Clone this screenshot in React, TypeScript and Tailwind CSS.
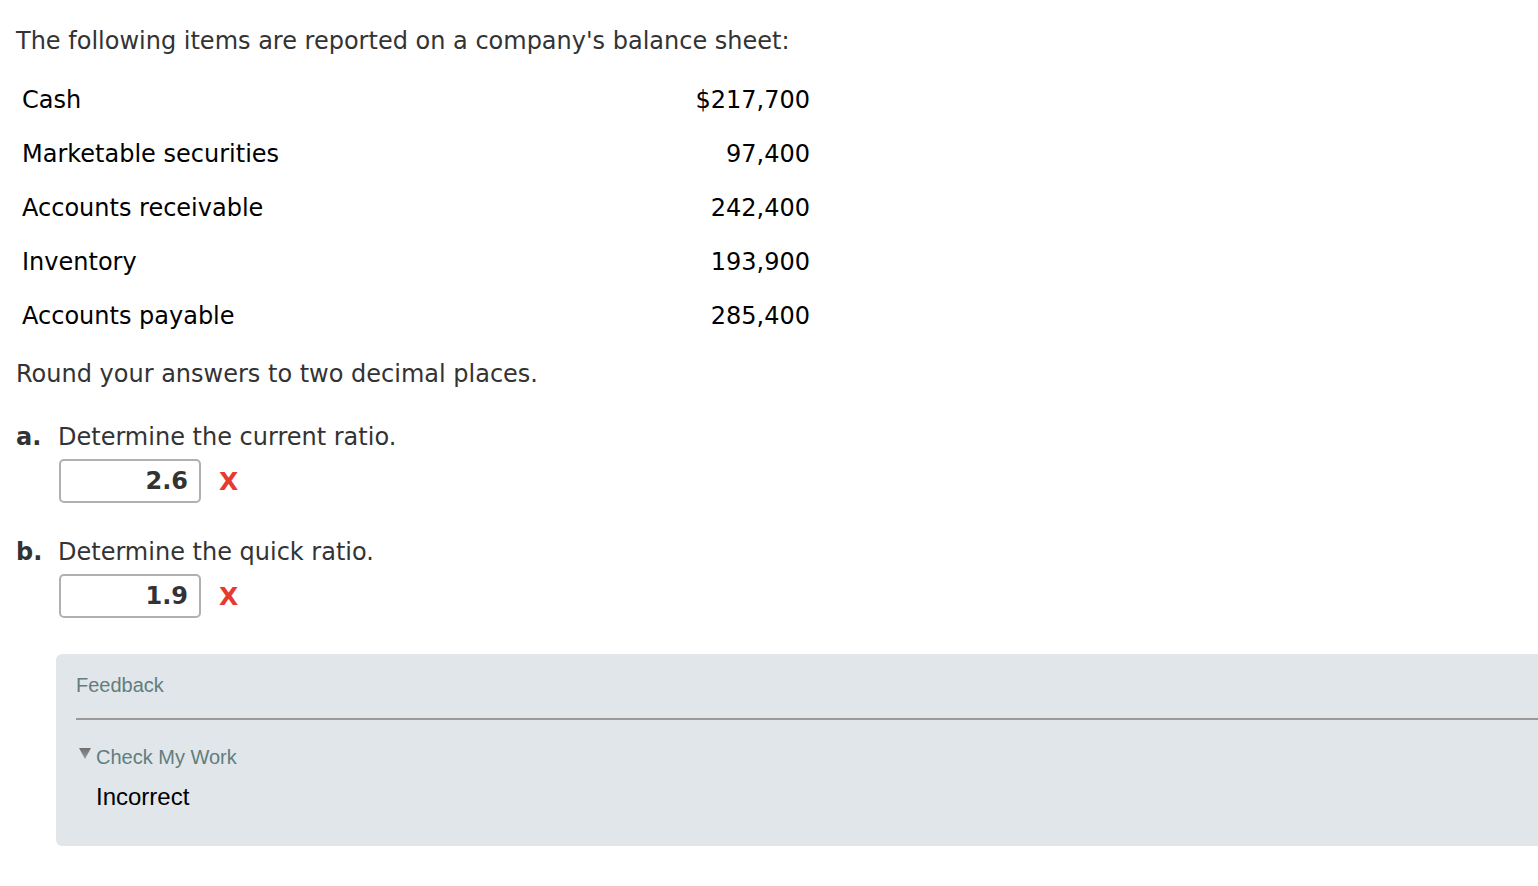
import React from 'react';

const rows: [string, string][] = [
  ['Cash', '$217,700'],
  ['Marketable securities', '97,400'],
  ['Accounts receivable', '242,400'],
  ['Inventory', '193,900'],
  ['Accounts payable', '285,400'],
];

function Answer({ label, prompt, value }: { label: string; prompt: string; value: string }) {
  return (
    <div className="flex flex-col">
      <div className="flex items-baseline leading-[28px] text-[#333]">
        <span className="w-[42px] font-bold">{label}</span>
        <span>{prompt}</span>
      </div>
      <div className="mt-[8px] ml-[43px] flex items-center">
        <div className="flex h-[44px] w-[142px] items-center justify-end rounded-[5px] border-2 border-[#b0b0b0] bg-white pr-[11px] text-[24px] font-bold text-[#333]">
          {value}
        </div>
        <span className="ml-[18px] text-[25px] font-bold leading-none text-[#e8392f]">X</span>
      </div>
    </div>
  );
}

export default function App() {
  return (
    <div className="min-h-[886px] overflow-hidden bg-white font-['DejaVu_Sans',Verdana,sans-serif] text-[24px]">
      <div className="pl-[16px] pt-[26px]">
        <p className="leading-[30px] text-[#333]">The following items are reported on a company's balance sheet:</p>

        <div className="mt-[17px] flex w-[794px] flex-col pl-[6px] text-black">
          {rows.map(([name, amt]) => (
            <div key={name} className="flex h-[54px] items-center justify-between">
              <span>{name}</span>
              <span>{amt}</span>
            </div>
          ))}
        </div>

        <p className="mt-[16px] leading-[30px] text-[#333]">Round your answers to two decimal places.</p>

        <div className="mt-[34px]">
          <Answer label="a." prompt="Determine the current ratio." value="2.6" />
        </div>
        <div className="mt-[35px]">
          <Answer label="b." prompt="Determine the quick ratio." value="1.9" />
        </div>
      </div>

      <div className="ml-[56px] mt-[36px] h-[192px] rounded-l-[6px] bg-[#e1e6ea] pl-[20px] pt-[18px] font-['Liberation_Sans',Arial,sans-serif]">
        <div className="text-[20px] leading-[26px] text-[#627d7d]">Feedback</div>
        <div className="mt-[20px] h-[2px] bg-[#999]" />
        <div className="mt-[24px] flex items-center text-[20px] leading-[26px] text-[#627d7d]">
          <svg width="14" height="14" viewBox="0 0 14 14" className="ml-[2px] mr-[4px] -mt-[6px]">
            <defs>
              <linearGradient id="tri" x1="0" y1="0" x2="0" y2="1">
                <stop offset="0" stopColor="#6f6f6f" />
                <stop offset="1" stopColor="#9a9a9a" />
              </linearGradient>
            </defs>
            <polygon points="1,1 13,1 7,12" fill="url(#tri)" />
          </svg>
          <span>Check My Work</span>
        </div>
        <div className="mt-[14px] pl-[20px] text-[24px] leading-[26px] text-black">Incorrect</div>
      </div>
    </div>
  );
}
